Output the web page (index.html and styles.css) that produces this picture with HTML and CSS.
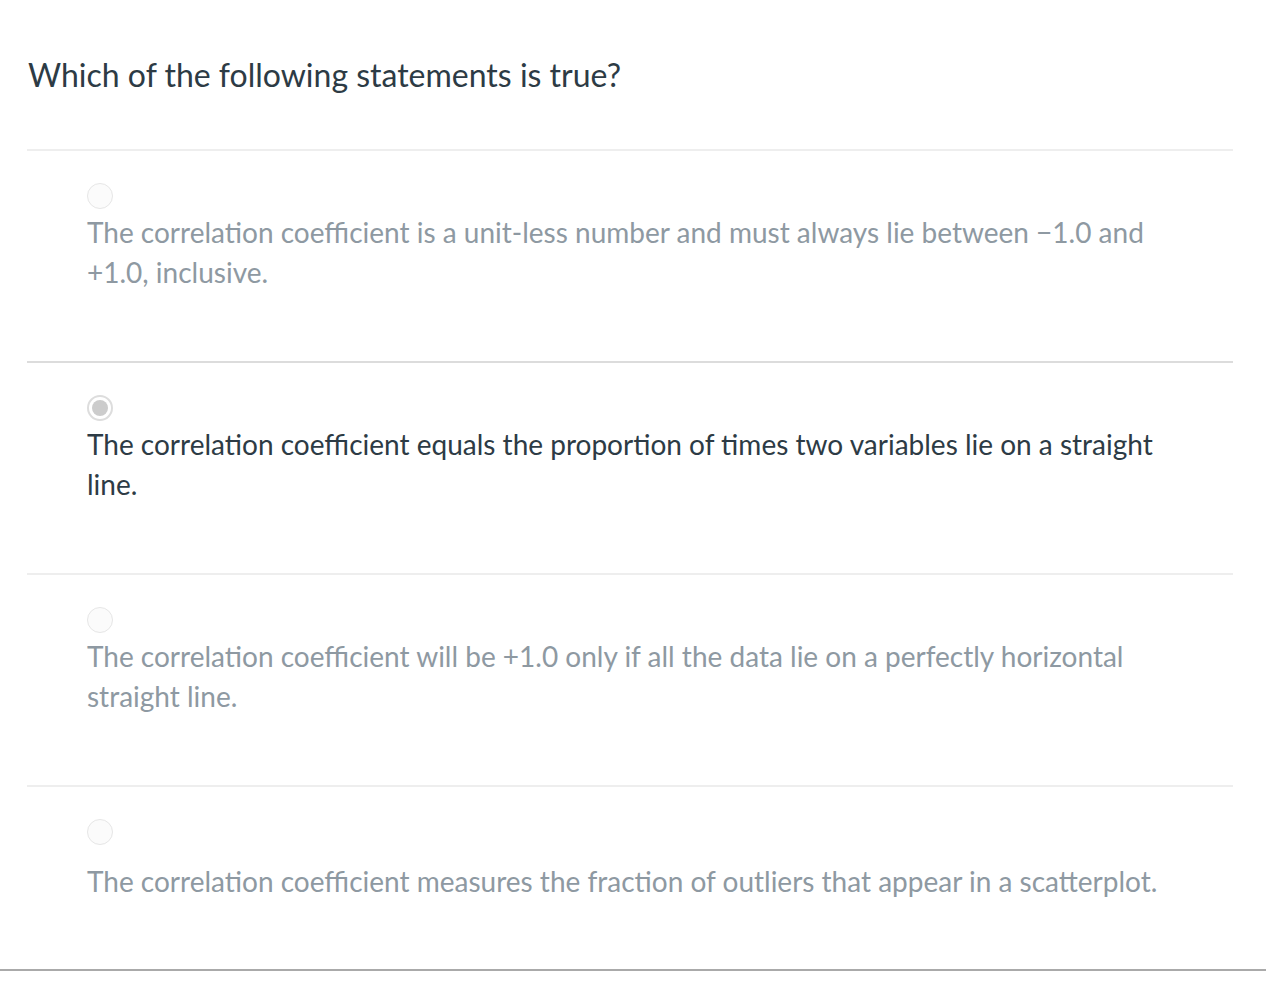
FILE: index.html
```html
<!DOCTYPE html>
<html>
<head>
<meta charset="utf-8">
<link rel="stylesheet" href="styles.css">
</head>
<body>
<div class="question">
  <h1 class="title">Which of the following statements is true?</h1>
  <div class="answers">
    <div class="answer">
      <span class="radio"></span>
      <div class="label">The correlation coefficient is a unit-less number and must always lie between −1.0 and +1.0, inclusive.</div>
    </div>
    <div class="answer answer--selected">
      <span class="radio radio--checked"></span>
      <div class="label">The correlation coefficient equals the proportion of times two variables lie on a straight line.</div>
    </div>
    <div class="answer">
      <span class="radio"></span>
      <div class="label">The correlation coefficient will be +1.0 only if all the data lie on a perfectly horizontal straight line.</div>
    </div>
    <div class="answer answer--last">
      <span class="radio"></span>
      <div class="label">The correlation coefficient measures the fraction of outliers that appear in a scatterplot.</div>
    </div>
  </div>
</div>
<div class="footer-rule"></div>
</body>
</html>
```
FILE: styles.css
```css
html, body {
  margin: 0;
  padding: 0;
  background: #ffffff;
}
body {
  font-family: Lato, "Open Sans", sans-serif;
  color: #2d3b45;
}
.question {
  padding: 0 33px 0 27px;
}
.title {
  margin: 0;
  padding: 55px 0 0 1px;
  height: 149px;
  box-sizing: border-box;
  font-size: 32px;
  font-weight: 400;
  line-height: 40px;
  color: #2d3b45;
}
.answer {
  border-top: 2px solid #eeeeee;
  padding: 32px 56px 68px 60px;
  height: 212px;
  box-sizing: border-box;
}
.answer--selected {
  border-top-color: #dcdcdc;
}
.answer--last {
  height: 184px;
  padding-bottom: 0;
}
.radio {
  display: block;
  width: 26px;
  height: 26px;
  box-sizing: border-box;
  border-radius: 50%;
  border: 1px solid #e6e6e6;
  background: #fbfbfb;
}
.radio--checked {
  border: 2px solid #dddddd;
  background: #ffffff;
  position: relative;
}
.radio--checked::after {
  content: "";
  position: absolute;
  left: 3px;
  top: 3px;
  width: 16px;
  height: 16px;
  border-radius: 50%;
  background: #cccccc;
}
.label {
  margin-top: 3px;
  font-size: 28px;
  line-height: 40px;
  color: #8e99a2;
}
.answer--selected .label {
  color: #2d3b45;
}
.answer--last .label {
  margin-top: 16px;
}
.footer-rule {
  height: 2px;
  background: #aaaaaa;
}
```
